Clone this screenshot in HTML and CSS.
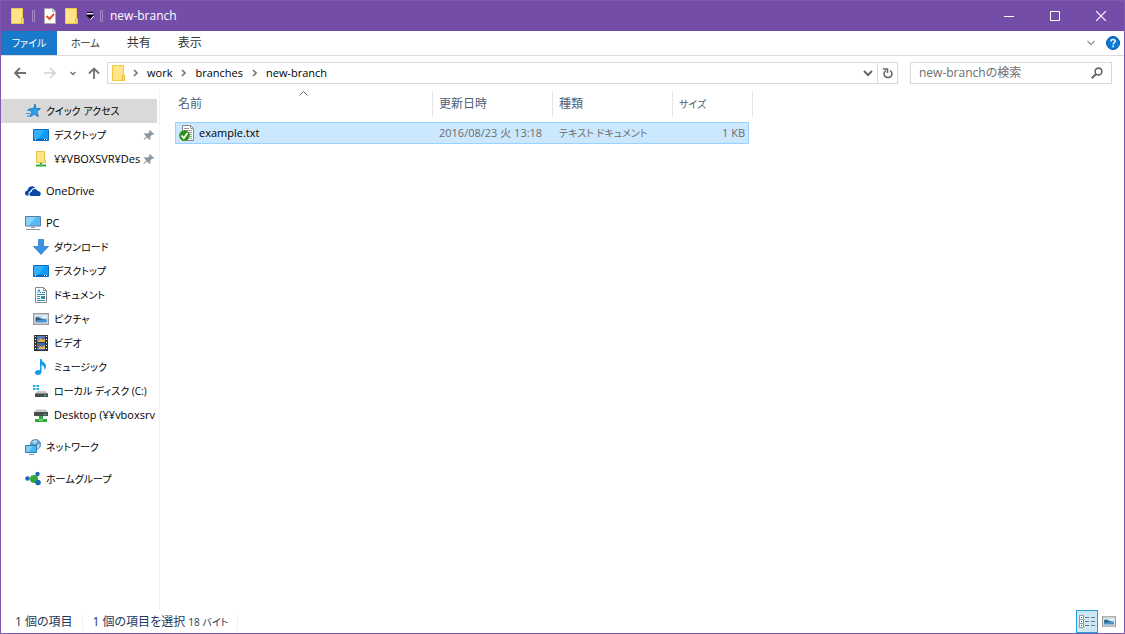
FILE: index.html
```
<!DOCTYPE html>
<html lang="ja">
<head>
    <meta charset="UTF-8">
    <meta name="viewport" content="width=device-width, initial-scale=1.0">
    <title>new-branch</title>
    <link rel="stylesheet" href="styles.css">
</head>
<body>

<!-- 共通アイコン -->
<svg class="defs" width="0" height="0" aria-hidden="true">
  <symbol id="i-folder" viewBox="0 0 16 16">
    <path d="M1.500.5h11v10h1v5h-12z" fill="#ffe48a" stroke="#f0c843"/>
    <path d="M11.500 15.500v-5h2v5z" fill="#ffe48a" stroke="#eab92d"/>
  </symbol>
  <symbol id="i-chev" viewBox="0 0 5 8">
    <path d="M1 1l3 3-3 3" fill="none" stroke="#777" stroke-width="1.6"/>
  </symbol>
  <symbol id="i-desktop" viewBox="0 0 16 16">
    <path d="M.5 2.500h15v11H.5z" fill="#0f9cf8" stroke="#0a70c4"/>
    <path d="M1 3h11L5 12H1z" fill="#35b0ff"/>
    <path d="M1 12.500h14" stroke="#075fae"/>
    <path d="M2 12.500h1M11 12.500h1M13 12.500h1" stroke="#fff"/>
  </symbol>
  <symbol id="i-pin" viewBox="0 0 12 12">
    <path d="M7 1l4 4-1 1-1-.3L7.200 8l.3 2-1 1L4 8.500 1 11l-.5-.5L3.300 7.500 1 5l1-1 2.300.4L6.500 3 6 2z" fill="#8d99a3"/>
  </symbol>
  <symbol id="i-picture" viewBox="0 0 16 12">
    <path d="M.7.7h14.600v10.600H.7z" fill="#fff" stroke="#999" stroke-width="1.400"/>
    <path d="M2.500 2.500h11v7h-11z" fill="#a4d3f7"/>
    <path d="M2.500 4.500c3-1.500 5 2 11 2v2h-11z" fill="#2f5f6c"/>
    <path d="M2.500 7.500c4-1 7-1 11-1v3h-11z" fill="#4c91cd"/>
    <path d="M7 4c2-1 4-1 6-1v2c-2 0-4 0-6-1z" fill="#eef7ff"/>
  </symbol>
</svg>

<div class="window">

  <!-- タイトルバー -->
  <header class="titlebar">
    <svg class="i16"><use href="#i-folder"/></svg>
    <span class="bar"></span>
    <button class="quick" aria-label="プロパティ">
      <svg class="i16" viewBox="0 0 16 16">
        <path d="M2.500.5h8l3 3v12h-11z" fill="#fff" stroke="#aaa"/>
        <path d="M10.500.5v3h3" fill="#eee" stroke="#aaa"/>
        <path d="M4.500 8l3 3 4.500-5" fill="none" stroke="#e5532d" stroke-width="2"/>
      </svg>
    </button>
    <button class="quick" aria-label="新しいフォルダー"><svg class="i16"><use href="#i-folder"/></svg></button>
    <button class="quick" aria-label="カスタマイズ">
      <svg width="8" height="8" viewBox="0 0 8 8"><path d="M1 .5h6" stroke="#000"/><path d="M0 3h8L4 7z"/><path d="M1 1.500h6M4.500 7.500L8 4" stroke="#fff" fill="none"/></svg>
    </button>
    <span class="bar"></span>
    <h1>new-branch</h1>
    <div class="winbtns">
      <button aria-label="最小化"><svg width="10" height="10"><path d="M0 5.500h10" stroke="#fff"/></svg></button>
      <button aria-label="最大化"><svg width="10" height="10"><path d="M.5.5h9v9h-9z" fill="none" stroke="#fff"/></svg></button>
      <button aria-label="閉じる"><svg width="10" height="10"><path d="M0 0l10 10M10 0L0 10" stroke="#fff" stroke-width="1.200"/></svg></button>
    </div>
  </header>

  <!-- リボン -->
  <nav class="ribbon">
    <button class="tab file kana">ファイル</button>
    <button class="tab kana">ホーム</button>
    <button class="tab">共有</button>
    <button class="tab">表示</button>
    <div class="ribbon-right">
      <button aria-label="リボンの展開"><svg width="8" height="6"><path d="M.5 1L4 4.500 7.500 1" fill="none" stroke="#999" stroke-width="1.300"/></svg></button>
      <button aria-label="ヘルプ">
        <svg width="14" height="14" viewBox="0 0 14 14">
          <circle cx="7" cy="7" r="6.500" fill="#0a7ad8" stroke="#0559a5"/>
          <path d="M5 5.400C5 3 9.200 3 9.200 5.300 9.200 6.800 7.200 6.800 7.200 8.500" fill="none" stroke="#fff" stroke-width="1.500"/>
          <path d="M6.400 9.600h1.600v1.600H6.400z" fill="#fff"/>
        </svg>
      </button>
    </div>
  </nav>

  <!-- アドレスバー -->
  <div class="navbar">
    <div class="arrows">
      <button aria-label="戻る"><svg width="12" height="12"><path d="M12 6H1.500M6 1L1 6l5 5" fill="none" stroke="#707070" stroke-width="1.800"/></svg></button>
      <button aria-label="進む" disabled><svg width="12" height="12"><path d="M0 6h10.500M6 1l5 5-5 5" fill="none" stroke="#d4d4d4" stroke-width="1.600"/></svg></button>
      <button class="recent" aria-label="最近表示した場所"><svg width="6" height="5"><path d="M.5 1L3 3.500 5.500 1" fill="none" stroke="#777" stroke-width="1.500"/></svg></button>
      <button aria-label="上へ"><svg width="12" height="12"><path d="M6 12V1.500M1 6.500l5-5 5 5" fill="none" stroke="#707070" stroke-width="1.800"/></svg></button>
    </div>
    <div class="address">
      <svg class="i16"><use href="#i-folder"/></svg>
      <svg class="chev"><use href="#i-chev"/></svg>
      <a href="#work">work</a>
      <svg class="chev"><use href="#i-chev"/></svg>
      <a href="#branches">branches</a>
      <svg class="chev"><use href="#i-chev"/></svg>
      <a href="#new-branch">new-branch</a>
      <button class="drop" aria-label="以前の場所"><svg width="10" height="7"><path d="M1 1l4 4 4-4" fill="none" stroke="#666" stroke-width="2"/></svg></button>
      <button class="reload" aria-label="更新"><svg width="10" height="12" viewBox="0 0 10 12"><path d="M7 3.500C10.500 6 9 10.500 5 10.500S-.5 6 3 3.500M0 2h4.500v4" fill="none" stroke="#666" stroke-width="1.500"/></svg></button>
    </div>
    <div class="search">
      <input type="text" aria-label="検索" placeholder="new-branchの検索">
      <svg width="12" height="12"><circle cx="7.500" cy="4.500" r="3.400" fill="none" stroke="#666" stroke-width="1.600"/><path d="M5 7L.8 11.200" stroke="#666" stroke-width="2"/></svg>
    </div>
  </div>

  <div class="main">

    <!-- ナビゲーション -->
    <nav class="sidebar">
      <ul>
        <li><a class="on kana" href="#quick">
          <svg class="i16" viewBox="0 0 16 16"><path d="M10 1l1 4.500h4.500L12 8.700l1.300 5-4-2.500-4.300 2.600 1.700-4.600L3.500 6l5-.5z" fill="#2f9fe8" stroke="#1272bf" stroke-width=".8"/><path d="M2 7.500h3M1 10.500h4M2 13h3" stroke="#3293d9"/></svg>
          <span>クイック アクセス</span></a></li>
        <li><a class="sub kana" href="#desktop"><svg class="i16"><use href="#i-desktop"/></svg><span>デスクトップ</span><svg class="pin"><use href="#i-pin"/></svg></a></li>
        <li><a class="sub" href="#vbox">
          <svg class="i16" viewBox="0 0 16 16"><path d="M3.500.5h8v9h1v2h-9z" fill="#ffe48a" stroke="#e9c143"/><path d="M8 12v2M3 14.500h10" stroke="#2fa63c" stroke-width="2"/><path d="M6 13.500h4v2H6z" fill="#5ccb5f"/></svg>
          <span>¥¥VBOXSVR¥Des</span><svg class="pin"><use href="#i-pin"/></svg></a></li>
      </ul>
      <ul>
        <li><a href="#onedrive">
          <svg class="i16" viewBox="0 0 16 16"><path d="M1 12.500C-1 10 0 8 2.500 7.500 3 4 7 1.500 10.500 5 8 4.500 6 6 5.500 8 3.500 8.500 3 11 4 12.500z" fill="#0a4aa6"/><path d="M6 13c-2.500-.5-2-4 .5-4C7 5.500 11.500 5 12.500 8c3-.3 4.500 3.500 2 5z" fill="#0a4aa6"/></svg>
          <span>OneDrive</span></a></li>
      </ul>
      <ul>
        <li><a href="#pc">
          <svg class="i16" viewBox="0 0 16 16"><path d="M.5 1.500h15v9.500H.5z" fill="#56b9f2" stroke="#5a7f9c"/><path d="M1 2h10L4 10.500H1z" fill="#8bd3fb"/><path d="M6 12.500h4M1 14.500h14" stroke="#8796a2"/></svg>
          <span>PC</span></a></li>
        <li><a class="sub kana" href="#downloads">
          <svg class="i16" viewBox="0 0 16 16"><path d="M5.500.5h5v7h5L8 15.500.5 7.500h5z" fill="#3a93e0" stroke="#2a7dcb" stroke-width=".8"/></svg>
          <span>ダウンロード</span></a></li>
        <li><a class="sub kana" href="#desktop"><svg class="i16"><use href="#i-desktop"/></svg><span>デスクトップ</span></a></li>
        <li><a class="sub kana" href="#documents">
          <svg class="i16" viewBox="0 0 16 16"><path d="M2.500.5h8l3 3v12h-11z" fill="#fff" stroke="#888"/><path d="M10.500.5v3h3" fill="none" stroke="#888"/><path d="M4.500 6L6 2.500 7.500 6M9 5.500h3M4 7.500h8M4 9.500h3M4 11.500h3M4 13.500h8" fill="none" stroke="#258fd0"/><path d="M8 9h4v3H8z" fill="#3b8a9c"/></svg>
          <span>ドキュメント</span></a></li>
        <li><a class="sub kana" href="#pictures"><svg class="i16"><use href="#i-picture"/></svg><span>ピクチャ</span></a></li>
        <li><a class="sub kana" href="#videos">
          <svg class="i16" viewBox="0 0 16 16"><path d="M1 0h14v16H1z" fill="#333"/><path d="M4 1h8v6H4z" fill="#4d83d6"/><path d="M4 8h8v7H4z" fill="#386dc0"/><path d="M5 6l3-3 1 2 3-1v3H4zM5 14l2-3 2 1 3-2v4z" fill="#e2b347"/><path d="M9 2h2v2H9zM5 9h2v2H5z" fill="#bc4a35"/><path d="M2.500 1v14M13.500 1v14" stroke="#fff" stroke-dasharray="1 2"/></svg>
          <span>ビデオ</span></a></li>
        <li><a class="sub kana" href="#music">
          <svg class="i16" viewBox="0 0 16 16"><path d="M7 0h1.500c.2 3 4.500 4 4.500 7 0 1.500-.5 3-1.500 4C12 8 10 6.500 8.500 6v7c0 3.500-6.500 4-6.500.8C2 11.500 5 10.500 7 11.500z" fill="#129af0"/></svg>
          <span>ミュージック</span></a></li>
        <li><a class="sub kana" href="#c">
          <svg class="i16" viewBox="0 0 16 16"><path d="M0 2h2.500v2H0zM3.500 2H6v2H3.500zM0 5h2.500v2H0zM3.500 5H6v2H3.500z" fill="#16b1ee"/><path d="M4 8h9l2 3H2z" fill="#c5c8ca"/><path d="M2 10.500h13V14H2z" fill="#484d50"/><path d="M11 12.500h2" stroke="#43dc5b"/></svg>
          <span>ローカル ディスク (C:)</span></a></li>
        <li><a class="sub" href="#d">
          <svg class="i16" viewBox="0 0 16 16"><path d="M3 2.500h10l2 3H1z" fill="#c5c8ca"/><path d="M1 5h14v4H1z" fill="#484d50"/><path d="M11 7.500h2" stroke="#43dc5b"/><path d="M6 9h4v3h4v3H2v-3h4z" fill="#35a843"/><path d="M6 12h4v2H6z" fill="#6bd36c"/></svg>
          <span>Desktop (¥¥vboxsrv</span></a></li>
      </ul>
      <ul>
        <li><a class="kana" href="#network">
          <svg class="i16" viewBox="0 0 16 16"><circle cx="10.500" cy="5.500" r="5.200" fill="#5b9fcd" stroke="#417da9" stroke-width=".6"/><path d="M7 3c2-2 4-2 6-1l-2 2-2 1zM12 6l3-1-1 4-2 1z" fill="#b5dbef"/><path d="M.5 6.500h11v7H.5z" fill="#4db5f0" stroke="#2c7db2"/><path d="M1 7h7l-4 6H1z" fill="#7dcdf8"/><path d="M4 15.500h5" stroke="#8796a2"/></svg>
          <span>ネットワーク</span></a></li>
      </ul>
      <ul>
        <li><a class="kana" href="#homegroup">
          <svg class="i16" viewBox="0 0 16 16"><path d="M8 8l4-4M9 9l4 3" stroke="#8aa7bb"/><circle cx="2.500" cy="7.500" r="2.300" fill="#1769b0"/><circle cx="9" cy="8" r="4" fill="#36a83a"/><circle cx="12.500" cy="3" r="2.200" fill="#1769b0"/><circle cx="13" cy="11.500" r="2.800" fill="#1769b0"/></svg>
          <span>ホームグループ</span></a></li>
      </ul>
    </nav>

    <!-- ファイル一覧 -->
    <div class="files">
      <table>
        <colgroup><col class="c-name"><col class="c-mid"><col class="c-mid"><col class="c-size"><col class="c-end"></colgroup>
        <thead>
          <tr>
            <th><div>名前<svg class="sort" width="9" height="5"><path d="M.5 4.500l4-4 4 4" fill="none" stroke="#666"/></svg></div></th>
            <th><div>更新日時</div></th>
            <th><div>種類</div></th>
            <th class="kana" colspan="2"><div>サイズ</div></th>
          </tr>
        </thead>
        <tbody>
          <tr>
            <td><a class="fname" href="#example">
              <svg class="i16" viewBox="0 0 16 16"><path d="M3.500.5h8l3 3v12h-11z" fill="#fff" stroke="#888"/><path d="M11.500.5v3h3M5 3.500h5M5 5.500h8M5 7.500h8M9 9.500h4M11 11.500h2M11 13.500h2" fill="none" stroke="#999"/><circle cx="5.500" cy="10.500" r="5.300" fill="#2d8f18"/><path d="M2.500 10.500l2.300 2.500L8.500 8" fill="none" stroke="#fff" stroke-width="1.800"/></svg>
              example.txt</a></td>
            <td>2016/08/23 火 13:18</td>
            <td><span class="kana">テキスト ドキュメント</span></td>
            <td>1 KB</td>
            <td></td>
          </tr>
        </tbody>
      </table>
    </div>
  </div>

  <!-- ステータスバー -->
  <footer class="status">
    <span>1 個の項目</span>
    <span>1 個の項目を選択 <small class="kana">18 バイト</small></span>
    <div class="views">
      <button class="on" aria-label="詳細表示">
        <svg width="16" height="14"><path d="M.5.5h4v4h-4zM.5 4.500h4v4h-4zM.5 8.500h4v4h-4z" fill="#fff" stroke="#999"/><path d="M2 2.500h1M2 6.500h1M2 10.500h1" stroke="#333"/><path d="M6 2.500h4M12 2.500h4M6 6.500h4M12 6.500h4M6 10.500h4M12 10.500h4" stroke="#777"/></svg>
      </button>
      <button aria-label="大アイコン"><svg width="14" height="11"><use href="#i-picture"/></svg></button>
    </div>
  </footer>

</div>
</body>
</html>
```
FILE: styles.css
```
* {
  box-sizing: border-box;
}

body {
  margin: 0;
  font-family: "Open Sans", "Noto Sans CJK JP", sans-serif;
  font-size: 12px;
  line-height: 16px;
  font-feature-settings: "palt";
  color: #000;
  background: #fff;
}

button, input {
  font: inherit;
  font-feature-settings: inherit;
  color: inherit;
  background: none;
  border: 0;
  padding: 0;
}

a {
  color: inherit;
  text-decoration: none;
}

svg {
  display: block;
  flex: none;
}

.defs {
  position: absolute;
}

.i16 {
  width: 16px;
  height: 16px;
}

.window {
  display: flex;
  flex-direction: column;
  min-height: 100vh;
  border: 1px solid #7f58b0;
}

/* タイトルバー */
.titlebar {
  display: flex;
  align-items: center;
  gap: 6px;
  height: 30px;
  padding-left: 9px;
  background: #744da9;
  color: #fff;
}

.titlebar h1 {
  margin: 0;
  font-size: 12px;
  font-weight: normal;
}

.bar {
  width: 3px;
  height: 12px;
  margin-right: 1px;
  border-left: 1px solid #a48bc6;
  border-right: 1px solid #a48bc6;
}

.winbtns {
  display: flex;
  align-self: stretch;
  margin-left: auto;
}

.winbtns button {
  display: grid;
  place-items: center;
  width: 46px;
}

/* リボン */
.ribbon {
  display: flex;
  height: 25px;
  gap: 1px;
  border-bottom: 1px solid #dadbdc;
  color: #333;
}

.tab {
  padding: 0 13px;
}

.tab.file {
  width: 56px;
  padding: 0;
  background: #1979ca;
  color: #fff;
}

.ribbon-right {
  display: flex;
  align-items: center;
  gap: 11px;
  margin-left: auto;
  padding-right: 4px;
}

/* アドレスバー */
.navbar {
  display: flex;
  align-items: center;
  gap: 12px;
  height: 34px;
  padding: 0 12px 0 13px;
}

.arrows {
  display: flex;
  align-items: center;
  gap: 12px;
}

.arrows button:first-child {
  margin-right: 6px;
}

.arrows .recent {
  margin-left: 2px;
}

.arrows + .address {
  margin-left: -5px;
}

.address {
  display: flex;
  align-items: center;
  gap: 9px;
  flex: 1;
  height: 22px;
  padding-left: 3px;
  border: 1px solid #d9d9d9;
  font-size: 11px;
}

.address .i16 {
  margin-right: -3px;
}

.chev {
  width: 5px;
  height: 8px;
}

.address .drop {
  margin-left: auto;
}

.reload {
  display: grid;
  place-items: center;
  align-self: stretch;
  width: 20px;
  margin-left: -5px;
  border-left: 1px solid #d9d9d9;
}

.search {
  display: flex;
  align-items: center;
  width: 202px;
  height: 22px;
  padding: 0 8px;
  border: 1px solid #d9d9d9;
}

.search input {
  flex: 1;
  min-width: 0;
  outline: none;
}

.search input::placeholder {
  color: #6d6d6d;
  opacity: 1;
}

.main {
  display: flex;
  flex: 1;
}

/* ナビゲーション */
.sidebar {
  width: 159px;
  padding: 9px 2px 0 0;
  border-right: 1px solid #f2f2f2;
  font-size: 11px;
}

.sidebar ul {
  margin: 0 0 8px;
  padding: 0;
  list-style: none;
}

.sidebar a {
  display: flex;
  align-items: center;
  gap: 5px;
  height: 24px;
  padding-left: 24px;
}

.sidebar a.sub {
  padding-left: 32px;
}

.sidebar a.on {
  background: #d9d9d9;
}

.sidebar span {
  flex: 1;
  white-space: nowrap;
}

.pin {
  width: 12px;
  height: 12px;
  margin-right: 2px;
  margin-left: -3px;
}

/* ファイル一覧 */
.files {
  flex: 1;
  padding: 1px 0 0 15px;
}

table {
  width: 578px;
  table-layout: fixed;
  border-spacing: 0;
}

.c-name {
  width: 258px;
}

.c-mid {
  width: 120px;
}

.c-size {
  width: 76px;
}

.c-end {
  width: 4px;
}

th {
  padding: 0 0 5px;
  font-weight: normal;
  text-align: left;
  color: #4c607a;
}

th div {
  position: relative;
  height: 26px;
  padding-left: 6px;
  line-height: 26px;
  border-right: 1px solid #e5e5e5;
}

th:first-child div {
  padding-left: 3px;
}

.sort {
  position: absolute;
  top: 0;
  left: 50%;
  margin-left: -5px;
}

td {
  height: 22px;
  padding: 0 6px;
  font-size: 11px;
  white-space: nowrap;
  color: #6d6d6d;
  background: #cce8ff;
  border: solid #99d1ff;
  border-width: 1px 0;
}

td:first-child {
  padding: 0 3px;
  border-left-width: 1px;
  color: #000;
}

td:nth-child(4) {
  padding: 0 3px;
  text-align: right;
  border-right-width: 1px;
}

td:last-child {
  padding: 0;
  background: none;
  border: 0;
}

.fname {
  display: flex;
  align-items: center;
  gap: 4px;
}

/* ステータスバー */
.status {
  display: flex;
  align-items: center;
  height: 23px;
  padding-left: 4px;
  color: #1e395b;
}

.status span {
  padding: 0 9px 0 10px;
  border-right: 1px solid #f0f0f0;
}

.views {
  display: flex;
  gap: 4px;
  margin-left: auto;
  padding-right: 8px;
}

.views button {
  display: grid;
  place-items: center;
}

.views .on {
  width: 22px;
  height: 23px;
  background: #cce8f5;
  border: 1px solid #26a0da;
}

/* カタカナは幅を詰める */
.kana {
  font-size: 10px;
}
```
